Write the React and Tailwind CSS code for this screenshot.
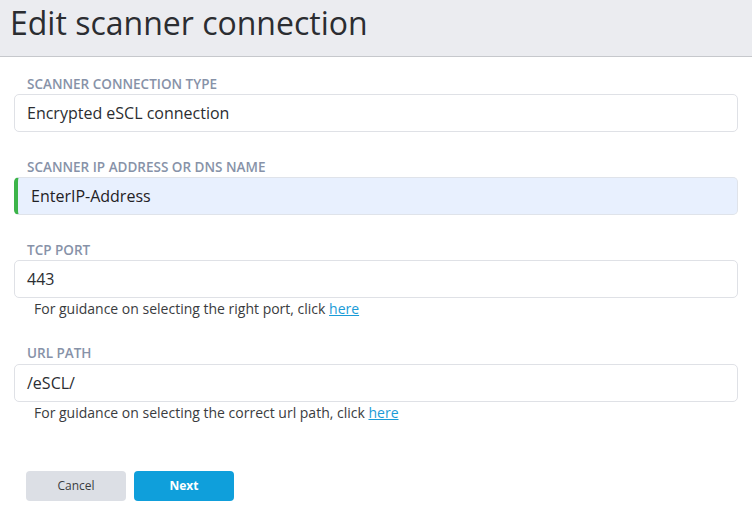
export default function App() {
  const font = { fontFamily: '"Open Sans", "Noto Sans", sans-serif' };
  const labelCls = 'block pl-[13px] text-[13.5px] leading-[16px] font-semibold text-[#8792a8] mb-[2px]';
  return (
    <div className="w-[752px] h-[512px] bg-white overflow-hidden" style={font}>
      <header className="h-[57px] bg-[#ebecf0] border-b border-[#c6c8cc] flex items-center px-[10px]">
        <h1 className="text-[32px] leading-none text-[#2b2d31] pb-[10px]">Edit scanner connection</h1>
      </header>

      <main className="px-[14px] pt-[19px]">
        <div>
          <label className={labelCls}>SCANNER CONNECTION TYPE</label>
          <div className="h-[38px] border border-[#dfe1e6] rounded-[5px] flex items-center pl-[12px] text-[16px] text-[#2b2d31]">
            Encrypted eSCL connection
          </div>
        </div>

        <div className="mt-[27px]">
          <label className={labelCls}>SCANNER IP ADDRESS OR DNS NAME</label>
          <div className="h-[38px] border border-[#dfe3ea] border-l-[4px] border-l-[#3cb44a] rounded-[5px] bg-[#e8f0fe] flex items-center pl-[13px] text-[16px] text-[#1f2125]">
            EnterIP-Address
          </div>
        </div>

        <div className="mt-[27px]">
          <label className={labelCls}>TCP PORT</label>
          <div className="h-[38px] border border-[#dfe1e6] rounded-[5px] flex items-center pl-[12px] text-[16px] text-[#2b2d31]">
            443
          </div>
          <p className="pl-[20px] mt-[2px] text-[14px] leading-[18px] text-[#3a3c40]">
            For guidance on selecting the right port, click{' '}
            <a href="#" className="text-[#1a9bd7] underline">here</a>
          </p>
        </div>

        <div className="mt-[27px]">
          <label className={labelCls.replace('mb-[2px]', 'mb-[3px]')}>URL PATH</label>
          <div className="h-[38px] border border-[#dfe1e6] rounded-[5px] flex items-center pl-[12px] text-[16px] text-[#2b2d31]">
            /eSCL/
          </div>
          <p className="pl-[20px] mt-[2px] text-[14px] leading-[18px] text-[#3a3c40]">
            For guidance on selecting the correct url path, click{' '}
            <a href="#" className="text-[#1a9bd7] underline">here</a>
          </p>
        </div>

        <div className="flex gap-[8px] pl-[12px] mt-[49px]">
          <button className="w-[100px] h-[30px] rounded-[4px] bg-[#dcdfe5] text-[12px] text-[#3a3c40]">
            Cancel
          </button>
          <button className="w-[100px] h-[30px] rounded-[4px] bg-[#0f9fdb] text-[12px] font-bold text-white">
            Next
          </button>
        </div>
      </main>
    </div>
  );
}
